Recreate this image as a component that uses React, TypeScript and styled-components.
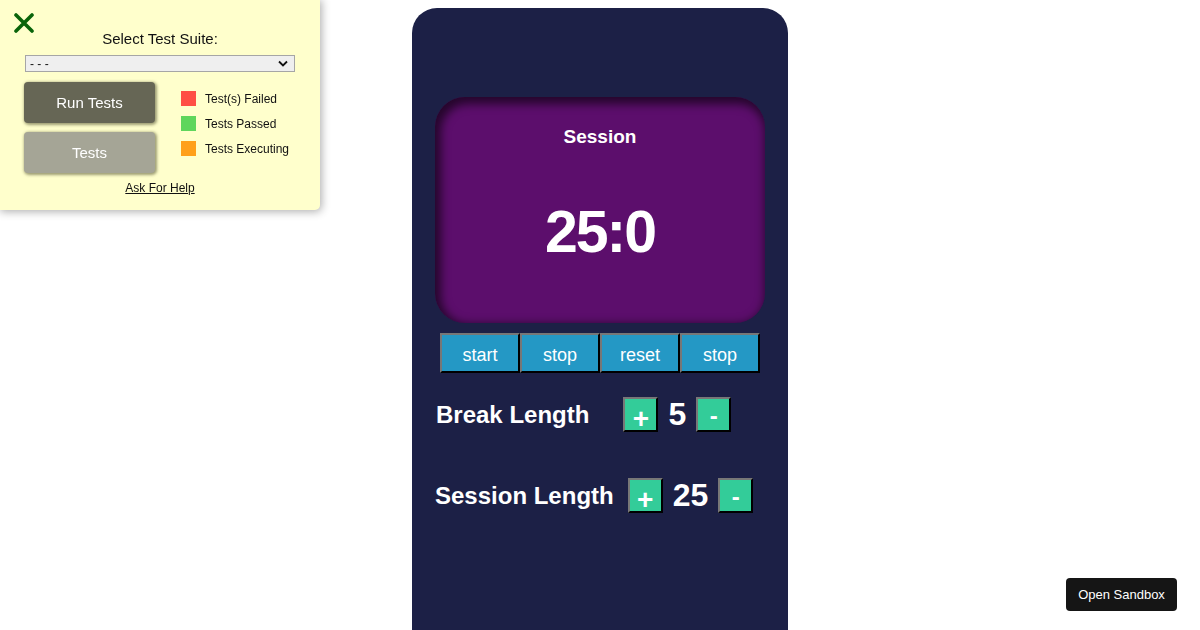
import React from 'react';
import styled, { createGlobalStyle } from 'styled-components';

const GlobalStyle = createGlobalStyle`
  body {
    margin: 8px 0 0;
    background: #fff;
    font-family: "Liberation Sans", Arial, sans-serif;
  }
`;

const Card = styled.main`
  width: 376px;
  min-height: 640px;
  margin: 0 auto;
  background: #1c2046;
  border-radius: 25px 25px 0 0;
  padding-top: 89px;
  box-sizing: border-box;
`;

const Display = styled.div`
  width: 330px;
  height: 226px;
  margin: 0 auto;
  background: #5c0e6c;
  border-radius: 30px;
  box-shadow: inset 3px 4px 10px 3px rgba(0, 0, 0, 0.6);
  display: flex;
  flex-direction: column;
  align-items: center;
  color: #fff;
  font-weight: bold;
`;

const DisplayLabel = styled.div`
  font-size: 19px;
  margin-top: 29px;
`;

const Time = styled.div`
  font-size: 59px;
  margin-top: 55px;
  letter-spacing: -2px;
  line-height: 1;
`;

const Controls = styled.div`
  display: flex;
  justify-content: center;
  margin-top: 10px;
`;

const ControlButton = styled.button`
  width: 80px;
  height: 40px;
  background: #2498c5;
  color: #fff;
  font-family: "Liberation Sans", Arial, sans-serif;
  font-size: 18px;
  border: 2px outset #777;
  border-right-color: #222;
  border-bottom-color: #222;
  padding: 4px 0 0;
`;

const LengthRow = styled.div<{ $top: number }>`
  display: flex;
  align-items: center;
  margin-top: ${p => p.$top}px;
  padding-left: 23px;
  color: #fff;
  font-weight: bold;
`;

const LengthLabel = styled.span<{ $gap: number; $inset: number }>`
  font-size: 24px;
  margin-left: ${p => p.$inset}px;
  margin-right: ${p => p.$gap}px;
`;

const Value = styled.span`
  font-size: 32px;
  margin: 0 10px;
`;

const StepButton = styled.button<{ $sign: 'plus' | 'minus' }>`
  width: 35px;
  height: 35px;
  background: #33cc99;
  color: #fff;
  font-family: "Liberation Sans", Arial, sans-serif;
  font-weight: bold;
  font-size: ${p => (p.$sign === 'plus' ? 28 : 24)}px;
  line-height: 1;
  border: 2px outset #777;
  border-right-color: #222;
  border-bottom-color: #222;
  padding: ${p => (p.$sign === 'plus' ? '9px 0 0' : '2px 0 0')};
  display: flex;
  justify-content: center;
  align-items: center;
  overflow: hidden;
`;

const TestPanel = styled.aside`
  position: fixed;
  top: 0;
  left: 0;
  width: 320px;
  height: 210px;
  background: #ffffcc;
  border-radius: 0 0 5px 0;
  box-shadow: 1px 1px 8px 1px rgba(0, 0, 0, 0.3);
  font-family: "Liberation Sans", Arial, sans-serif;
  color: #111;
  box-sizing: border-box;
`;

const CloseIcon = styled.svg`
  position: absolute;
  top: 13px;
  left: 14px;
`;

const SuiteTitle = styled.div`
  text-align: center;
  font-size: 15px;
  padding-top: 30px;
  height: 25px;
`;

const SuiteSelect = styled.div`
  width: 270px;
  height: 17px;
  margin: 0 auto;
  box-sizing: border-box;
  border: 1px solid #a6a6a6;
  background: #efefef;
  font-size: 12px;
  display: flex;
  align-items: center;
  justify-content: space-between;
  padding: 0 6px 0 4px;
`;

const PanelBody = styled.div`
  display: flex;
  padding: 10px 0 0 24px;
`;

const ButtonColumn = styled.div`
  display: flex;
  flex-direction: column;
  gap: 9px;
`;

const PanelButton = styled.div<{ $dark?: boolean }>`
  width: 131px;
  height: 41px;
  border-radius: 4px;
  background: ${p => (p.$dark ? '#666655' : '#a5a596')};
  color: #fff;
  font-size: 15px;
  display: flex;
  align-items: center;
  justify-content: center;
  box-shadow: 1px 1px 3px 1px rgba(60, 60, 30, 0.5);
`;

const Legend = styled.div`
  display: flex;
  flex-direction: column;
  gap: 10px;
  padding: 9px 0 0 26px;
`;

const LegendItem = styled.div`
  display: flex;
  align-items: center;
  gap: 9px;
  font-size: 12px;
`;

const Swatch = styled.span<{ $color: string }>`
  width: 15px;
  height: 15px;
  background: ${p => p.$color};
`;

const HelpLink = styled.a`
  display: block;
  text-align: center;
  font-size: 12px;
  color: #111;
  text-decoration: underline;
  margin-top: 8px;
`;

const SandboxButton = styled.div`
  position: fixed;
  right: 23px;
  bottom: 19px;
  width: 111px;
  height: 33px;
  border-radius: 4px;
  background: #151515;
  color: #fff;
  font-family: "Liberation Sans", Arial, sans-serif;
  font-size: 13px;
  display: flex;
  align-items: center;
  justify-content: center;
`;

const legend = [
  { color: '#ff4f44', label: 'Test(s) Failed' },
  { color: '#5fd65c', label: 'Tests Passed' },
  { color: '#ffa01a', label: 'Tests Executing' },
];

export default function App() {
  return (
    <>
      <GlobalStyle />
      <Card>
        <Display>
          <DisplayLabel>Session</DisplayLabel>
          <Time>25:0</Time>
        </Display>
        <Controls>
          <ControlButton>start</ControlButton>
          <ControlButton>stop</ControlButton>
          <ControlButton>reset</ControlButton>
          <ControlButton>stop</ControlButton>
        </Controls>
        <LengthRow $top={23}>
          <LengthLabel $inset={1} $gap={34}>Break Length</LengthLabel>
          <StepButton $sign="plus">+</StepButton>
          <Value>5</Value>
          <StepButton $sign="minus">-</StepButton>
        </LengthRow>
        <LengthRow $top={44}>
          <LengthLabel $inset={0} $gap={14}>Session Length</LengthLabel>
          <StepButton $sign="plus">+</StepButton>
          <Value>25</Value>
          <StepButton $sign="minus">-</StepButton>
        </LengthRow>
      </Card>

      <TestPanel>
        <CloseIcon width="20" height="20" viewBox="0 0 20 20">
          <path d="M2 2 L18 18 M18 2 L2 18" stroke="#0a640a" strokeWidth="3.6" strokeLinecap="round" />
        </CloseIcon>
        <SuiteTitle>Select Test Suite:</SuiteTitle>
        <SuiteSelect>
          <span>- - -</span>
          <svg width="10" height="7" viewBox="0 0 10 7">
            <path d="M1 1.5 L5 5.5 L9 1.5" fill="none" stroke="#111" strokeWidth="1.8" />
          </svg>
        </SuiteSelect>
        <PanelBody>
          <ButtonColumn>
            <PanelButton $dark>Run Tests</PanelButton>
            <PanelButton>Tests</PanelButton>
          </ButtonColumn>
          <Legend>
            {legend.map(item => (
              <LegendItem key={item.label}>
                <Swatch $color={item.color} />
                {item.label}
              </LegendItem>
            ))}
          </Legend>
        </PanelBody>
        <HelpLink>Ask For Help</HelpLink>
      </TestPanel>

      <SandboxButton>Open Sandbox</SandboxButton>
    </>
  );
}
